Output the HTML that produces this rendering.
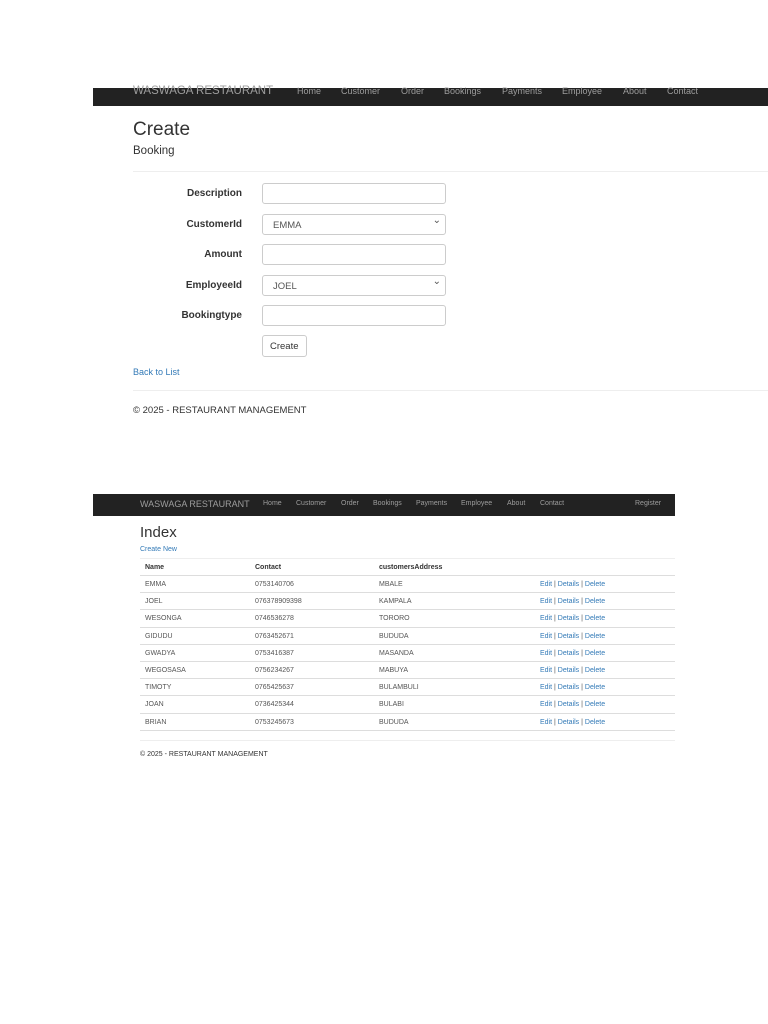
<!DOCTYPE html>
<html><head><meta charset="utf-8"><style>
*{margin:0;padding:0;box-sizing:border-box}
body{width:768px;height:1024px;background:#fff;position:relative;font-family:"Liberation Sans",sans-serif;color:#333;overflow:hidden}
.a{position:absolute;white-space:nowrap}
.nav1{position:absolute;left:93px;top:88px;width:675px;height:18px;background:#222}
.nav2{position:absolute;left:93px;top:494px;width:582px;height:22px;background:#222}
.lbl{position:absolute;width:110px;text-align:right;left:132px;font-size:10px;font-weight:bold;color:#333}
.inp{position:absolute;left:262px;width:184px;height:21px;border:1px solid #ccc;border-radius:3px;background:#fff;font-size:9.5px;color:#555;padding:5px 10px}
.sel::after{content:"⌄";position:absolute;right:4px;top:0px;font-size:10px;color:#555}
.lnk{color:#337ab7}
.hr{position:absolute;height:1px;background:#eee}
.t{font-size:7px;color:#555}
</style></head><body>
<div class="nav1"></div>
<div class="a" style="left:133px;top:85px;font-size:11.5px;color:#9d9d9d">WASWAGA RESTAURANT</div>
<div class="a" style="left:297px;top:86px;font-size:9px;color:#9d9d9d;word-spacing:0">
<span style="position:absolute;left:0">Home</span><span style="position:absolute;left:44px">Customer</span><span style="position:absolute;left:104px">Order</span><span style="position:absolute;left:147px">Bookings</span><span style="position:absolute;left:205px">Payments</span><span style="position:absolute;left:265px">Employee</span><span style="position:absolute;left:326px">About</span><span style="position:absolute;left:370px">Contact</span></div>
<div class="a" style="left:133px;top:119px;font-size:19px;color:#333">Create</div>
<div class="a" style="left:133px;top:145px;font-size:11.5px;color:#333">Booking</div>
<div class="hr" style="left:133px;top:171px;width:635px"></div>
<div class="lbl" style="top:188px">Description</div>
<div class="inp" style="top:183px"></div>
<div class="lbl" style="top:219px">CustomerId</div>
<div class="inp sel" style="top:214px">EMMA</div>
<div class="lbl" style="top:249px">Amount</div>
<div class="inp" style="top:244px"></div>
<div class="lbl" style="top:280px">EmployeeId</div>
<div class="inp sel" style="top:275px">JOEL</div>
<div class="lbl" style="top:310px">Bookingtype</div>
<div class="inp" style="top:305px"></div>
<div class="inp" style="top:335px;width:45px;height:22px;font-size:9.5px;color:#333;padding:5px 7px">Create</div>
<div class="a lnk" style="left:133px;top:367px;font-size:9px">Back to List</div>
<div class="hr" style="left:133px;top:390px;width:635px"></div>
<div class="a" style="left:133px;top:405px;font-size:9.5px;color:#333">© 2025 - RESTAURANT MANAGEMENT</div>

<div class="nav2"></div>
<div class="a" style="left:140px;top:499px;font-size:9px;color:#9d9d9d">WASWAGA RESTAURANT</div>
<div class="a" style="left:263px;top:500px;font-size:7px;color:#9d9d9d">
<span style="position:absolute;left:0">Home</span><span style="position:absolute;left:33px">Customer</span><span style="position:absolute;left:78px">Order</span><span style="position:absolute;left:110px">Bookings</span><span style="position:absolute;left:153px">Payments</span><span style="position:absolute;left:198px">Employee</span><span style="position:absolute;left:244px">About</span><span style="position:absolute;left:277px">Contact</span><span style="position:absolute;left:372px">Register</span></div>
<div class="a" style="left:140px;top:524px;font-size:15px;color:#333">Index</div>
<div class="a lnk" style="left:140px;top:546px;font-size:7px">Create New</div>
<div class="hr" style="left:140px;top:558px;width:535px"></div>
<div class="a" style="left:145px;top:564px;font-size:7px;font-weight:bold;color:#333">Name</div>
<div class="a" style="left:255px;top:564px;font-size:7px;font-weight:bold;color:#333">Contact</div>
<div class="a" style="left:379px;top:564px;font-size:7px;font-weight:bold;color:#333">customersAddress</div>
<div id="rows"></div>
<script>
var d=[["EMMA","0753140706","MBALE"],["JOEL","076378909398","KAMPALA"],["WESONGA","0746536278","TORORO"],["GIDUDU","0763452671","BUDUDA"],["GWADYA","0753416387","MASANDA"],["WEGOSASA","0756234267","MABUYA"],["TIMOTY","0765425637","BULAMBULI"],["JOAN","0736425344","BULABI"],["BRIAN","0753245673","BUDUDA"]];
var h="";
for(var i=0;i<d.length;i++){var y=581+i*17.2;
h+='<div class="hr" style="left:140px;top:'+(y-6)+'px;width:535px;background:#ddd"></div>';
h+='<div class="a t" style="left:145px;top:'+y+'px">'+d[i][0]+'</div>';
h+='<div class="a t" style="left:255px;top:'+y+'px">'+d[i][1]+'</div>';
h+='<div class="a t" style="left:379px;top:'+y+'px">'+d[i][2]+'</div>';
h+='<div class="a t" style="left:540px;top:'+y+'px"><span class="lnk">Edit</span> | <span class="lnk">Details</span> | <span class="lnk">Delete</span></div>';}
h+='<div class="hr" style="left:140px;top:'+(581+9*17.2-6)+'px;width:535px;background:#ddd"></div>';
document.getElementById("rows").innerHTML=h;
</script>
<div class="hr" style="left:140px;top:740px;width:535px"></div>
<div class="a" style="left:140px;top:751px;font-size:7px;color:#333">© 2025 - RESTAURANT MANAGEMENT</div>
</body></html>
